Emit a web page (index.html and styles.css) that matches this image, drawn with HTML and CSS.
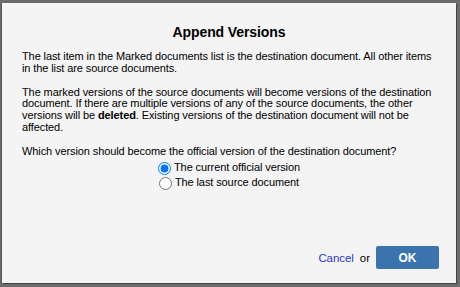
FILE: index.html
```html
<!DOCTYPE html>
<html>
<head>
<meta charset="utf-8">
<link rel="stylesheet" href="styles.css">
</head>
<body>
<div class="dialog">
  <h1 class="title">Append Versions</h1>
  <div class="content">
    <p>The last item in the Marked documents list is the destination document. All other items in the list are source documents.</p>
    <p>The marked versions of the source documents will become versions of the destination document. If there are multiple versions of any of the source documents, the other versions will be <b class="strong">deleted</b>. Existing versions of the destination document will not be affected.</p>
    <p class="question">Which version should become the official version of the destination document?</p>
    <div class="options">
      <label class="option"><input type="radio" name="v" checked> The current official version</label>
      <label class="option"><input type="radio" name="v"> The last source document</label>
    </div>
  </div>
  <div class="footer">
    <a class="cancel" href="#">Cancel</a>
    <span class="or">or</span>
    <button class="ok">OK</button>
  </div>
</div>
</body>
</html>
```
FILE: styles.css
```css
html, body {
  margin: 0;
  padding: 0;
  height: 100%;
}
body {
  background: #6c6c6c;
  font-family: "Liberation Sans", Arial, sans-serif;
  color: #000;
}
.dialog {
  box-sizing: border-box;
  margin: 3px 0 0 2px;
  width: 454px;
  height: 280px;
  background: #f4f4f4;
  box-shadow: 1px 1px 0 #444, -1px 0 0 #555;
  display: flex;
  flex-direction: column;
  padding: 0 20px 0 20px;
}
.title {
  margin: 20px 0 0 0;
  font-size: 14px;
  letter-spacing: -0.1px;
  font-weight: bold;
  text-align: center;
  line-height: 18px;
}
.content {
  font-size: 11px;
  line-height: 11.8px;
  letter-spacing: -0.1px;
  margin-top: 10px;
}
.content p {
  margin: 0 0 12px 0;
}
.content p.question {
  margin-bottom: 3px;
}
.strong {
  display: inline-block;
  font-weight: bold;
}
.options {
  display: flex;
  flex-direction: column;
  align-items: center;
}
.option {
  display: flex;
  align-items: center;
  height: 15px;
}
.option input {
  margin: 0 3px 0 0;
  width: 13px;
  height: 13px;
}
.footer {
  margin-top: auto;
  margin-bottom: 14px;
  display: flex;
  justify-content: flex-end;
  align-items: center;
  font-size: 11.4px;
  margin-right: -3px;
}
.cancel {
  color: #2a36c9;
  text-decoration: none;
}
.or {
  margin: 0 6px 0 6px;
}
.ok {
  width: 63px;
  height: 23px;
  border: none;
  border-radius: 2px;
  background: #3b74ad;
  color: #fff;
  font-family: "Liberation Sans", Arial, sans-serif;
  font-weight: bold;
  font-size: 12px;
  padding: 0;
}
```
